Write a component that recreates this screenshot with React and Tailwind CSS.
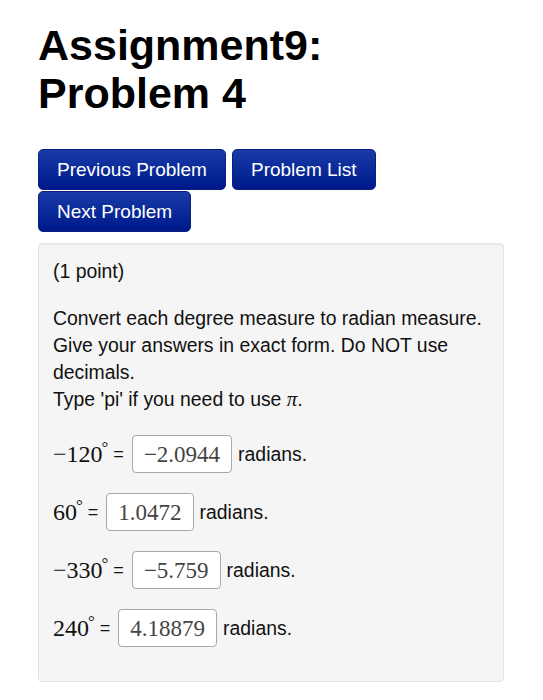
export default function App() {
  const rows = [
    { deg: "\u2212120", val: "\u22122.0944" },
    { deg: "60", val: "1.0472" },
    { deg: "\u2212330", val: "\u22125.759" },
    { deg: "240", val: "4.18879" },
  ];

  const btn =
    "h-[41px] px-[18px] rounded-[5px] border border-[#0a1f80] bg-gradient-to-b from-[#1a3aa8] to-[#00188a] text-white text-[19px] leading-none";

  return (
    <div
      className="min-h-[700px] bg-white pl-[38px] pr-[39px] pt-[21px] text-[#111]"
      style={{ fontFamily: '"Liberation Sans", Arial, sans-serif' }}
    >
      <h1 className="text-[43px] font-bold leading-[48px] text-black">
        Assignment9:
        <br />
        Problem 4
      </h1>

      <div className="mt-[32px] flex flex-wrap gap-x-[6px] gap-y-[1px]">
        <button className={btn}>Previous Problem</button>
        <button className={btn}>Problem List</button>
        <button className={btn}>Next Problem</button>
      </div>

      <div className="mt-[11px] rounded-[4px] border border-[#e3e3e3] bg-[#f5f5f5] px-[14px] pt-[14px] pb-[34px] text-[19.4px] leading-[27px] shadow-[inset_0_1px_1px_rgba(0,0,0,0.05)]">
        <p>(1 point)</p>
        <p className="mt-[20px]">
          Convert each degree measure to radian measure. Give your answers in
          exact form. Do NOT use decimals.
          <br />
          Type 'pi' if you need to use{" "}
          <span
            className="italic text-[21px]"
            style={{ fontFamily: '"Liberation Serif", serif' }}
          >
            π
          </span>
          .
        </p>

        <div className="mt-[22px] flex flex-col gap-[20px]">
          {rows.map((r) => (
            <div key={r.deg} className="flex items-center">
              <span
                className="text-[24px] leading-none"
                style={{ fontFamily: '"Liberation Serif", serif' }}
              >
                {r.deg}
                <span className="relative -top-[9px] -ml-[1px] text-[17px]">°</span>
              </span>
              <span className="ml-[5px] mr-[8px] text-[18px]">=</span>
              <span
                className="flex h-[38px] items-center rounded-[4px] border border-[#a8a8a8] bg-white px-[11px] text-[23px] text-[#444]"
                style={{ fontFamily: '"Liberation Serif", serif' }}
              >
                {r.val}
              </span>
              <span className="ml-[6px]">radians.</span>
            </div>
          ))}
        </div>
      </div>
    </div>
  );
}
